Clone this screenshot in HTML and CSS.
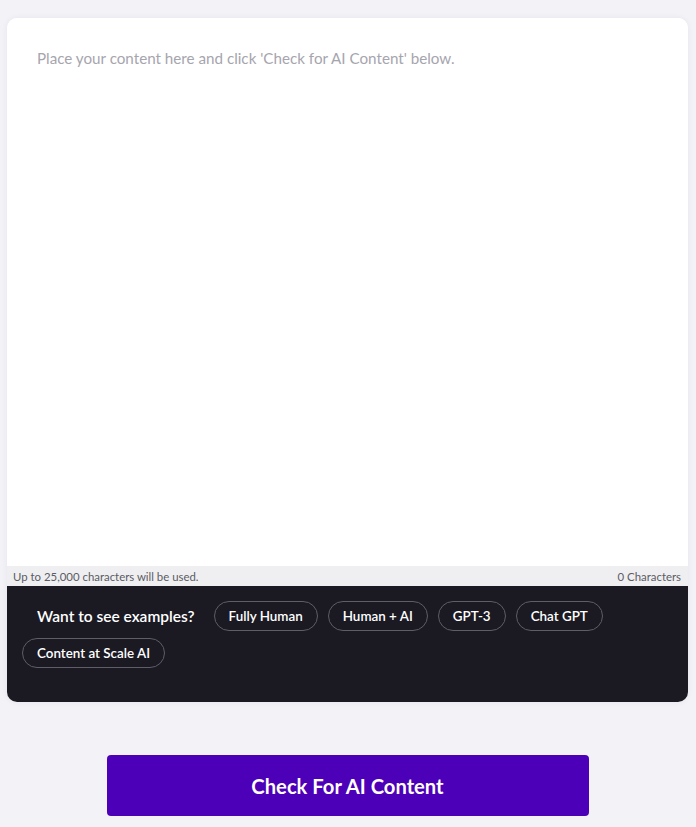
FILE: index.html
```html
<!DOCTYPE html>
<html lang="en">
<head>
<meta charset="utf-8">
<title>AI Content Checker</title>
<link rel="stylesheet" href="styles.css">
</head>
<body>
<main class="page">
  <section class="card">
    <textarea class="editor" placeholder="Place your content here and click 'Check for AI Content' below."></textarea>
    <div class="meta">
      <span>Up to 25,000 characters will be used.</span>
      <span>0 Characters</span>
    </div>
    <div class="examples">
      <span class="examples-label">Want to see examples?</span>
      <button class="chip">Fully Human</button>
      <button class="chip">Human + AI</button>
      <button class="chip">GPT-3</button>
      <button class="chip">Chat GPT</button>
      <button class="chip">Content at Scale AI</button>
    </div>
  </section>
  <div class="actions">
    <button class="check">Check For AI Content</button>
  </div>
</main>
</body>
</html>
```
FILE: styles.css
```css
html, body {
  margin: 0;
  padding: 0;
  background: #f3f2f7;
  font-family: Lato, "Noto Sans", sans-serif;
}
.page {
  padding: 18px 8px 0 7px;
}
.card {
  background: #ffffff;
  border-radius: 10px;
  overflow: hidden;
  box-shadow: 0 0 6px rgba(40, 30, 80, 0.06);
  display: flex;
  flex-direction: column;
}
.editor {
  display: block;
  height: 548px;
  box-sizing: border-box;
  border: none;
  outline: none;
  resize: none;
  padding: 31px 30px;
  font-family: inherit;
  font-size: 15.2px;
  color: #333;
  background: #fff;
}
.editor::placeholder {
  color: #a6a5ae;
}
.meta {
  height: 20px;
  background: #efeff2;
  display: flex;
  justify-content: space-between;
  align-items: center;
  padding: 0 7px 0 6px;
  font-size: 11.4px;
  color: #5b5b63;
}
.examples {
  background: #1b1a23;
  height: 116px;
  box-sizing: border-box;
  padding: 15px 20px 0 15px;
  display: flex;
  flex-wrap: wrap;
  align-content: flex-start;
  align-items: center;
  row-gap: 7px;
  column-gap: 10px;
}
.examples-label {
  color: #ffffff;
  font-size: 15.5px;
  font-weight: 600;
  margin: 0 9px 0 15px;
}
.chip {
  height: 30px;
  padding: 0 14px;
  border: 1px solid #5e5d68;
  border-radius: 15px;
  background: transparent;
  color: #ffffff;
  font-family: inherit;
  font-size: 13.4px;
  font-weight: 600;
}
.actions {
  display: flex;
  justify-content: center;
  padding-top: 53px;
}
.check {
  width: 482px;
  height: 61px;
  border: none;
  border-radius: 4px;
  background: #4c00b8;
  color: #ffffff;
  font-family: inherit;
  font-size: 20.2px;
  font-weight: 700;
}
```
